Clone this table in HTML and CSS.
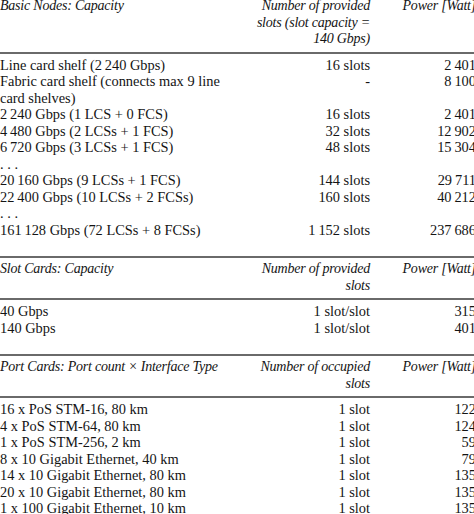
FILE: index.html
```html
<!DOCTYPE html>
<html>
<head>
<meta charset="utf-8">
<link rel="stylesheet" href="styles.css">
</head>
<body>
<table class="spec">
  <colgroup>
    <col class="c1"><col class="c2"><col class="c3">
  </colgroup>
  <tbody>
    <tr class="head first">
      <th class="l">Basic Nodes: Capacity</th>
      <th class="r">Number of provided<br>slots (slot capacity =<br>140 Gbps)</th>
      <th class="r">Power [Watt]</th>
    </tr>
    <tr class="top"><td>Line card shelf (2&thinsp;240 Gbps)</td><td class="r">16 slots</td><td class="r">2&thinsp;401</td></tr>
    <tr><td>Fabric card shelf (connects max 9 line<br>card shelves)</td><td class="r">-</td><td class="r">8&thinsp;100</td></tr>
    <tr><td>2&thinsp;240 Gbps (1 LCS + 0 FCS)</td><td class="r">16 slots</td><td class="r">2&thinsp;401</td></tr>
    <tr><td>4&thinsp;480 Gbps (2 LCSs + 1 FCS)</td><td class="r">32 slots</td><td class="r">12&thinsp;902</td></tr>
    <tr><td>6&thinsp;720 Gbps (3 LCSs + 1 FCS)</td><td class="r">48 slots</td><td class="r">15&thinsp;304</td></tr>
    <tr><td>. . .</td><td></td><td></td></tr>
    <tr><td>20&thinsp;160 Gbps (9 LCSs + 1 FCS)</td><td class="r">144 slots</td><td class="r">29&thinsp;711</td></tr>
    <tr><td>22&thinsp;400 Gbps (10 LCSs + 2 FCSs)</td><td class="r">160 slots</td><td class="r">40&thinsp;212</td></tr>
    <tr><td>. . .</td><td></td><td></td></tr>
    <tr class="last"><td>161&thinsp;128 Gbps (72 LCSs + 8 FCSs)</td><td class="r">1&thinsp;152 slots</td><td class="r">237&thinsp;686</td></tr>

    <tr class="head">
      <th class="l">Slot Cards: Capacity</th>
      <th class="r">Number of provided<br>slots</th>
      <th class="r">Power [Watt]</th>
    </tr>
    <tr class="top"><td>40 Gbps</td><td class="r">1 slot/slot</td><td class="r">315</td></tr>
    <tr class="last"><td>140 Gbps</td><td class="r">1 slot/slot</td><td class="r">401</td></tr>

    <tr class="head">
      <th class="l">Port Cards: Port count × Interface Type</th>
      <th class="r">Number of occupied<br>slots</th>
      <th class="r">Power [Watt]</th>
    </tr>
    <tr class="top"><td>16 x PoS STM-16, 80 km</td><td class="r">1 slot</td><td class="r">122</td></tr>
    <tr><td>4 x PoS STM-64, 80 km</td><td class="r">1 slot</td><td class="r">124</td></tr>
    <tr><td>1 x PoS STM-256, 2 km</td><td class="r">1 slot</td><td class="r">59</td></tr>
    <tr><td>8 x 10 Gigabit Ethernet, 40 km</td><td class="r">1 slot</td><td class="r">79</td></tr>
    <tr><td>14 x 10 Gigabit Ethernet, 80 km</td><td class="r">1 slot</td><td class="r">135</td></tr>
    <tr><td>20 x 10 Gigabit Ethernet, 80 km</td><td class="r">1 slot</td><td class="r">135</td></tr>
    <tr><td>1 x 100 Gigabit Ethernet, 10 km</td><td class="r">1 slot</td><td class="r">135</td></tr>
  </tbody>
</table>
</body>
</html>
```
FILE: styles.css
```css
html, body {
  margin: 0;
  padding: 0;
  overflow: hidden;
  background: #ffffff;
}
body {
  width: 474px;
  height: 514px;
  font-family: "Liberation Serif", "Times New Roman", serif;
  font-size: 14.4px;
  line-height: 16.5px;
  color: #141414;
}
.spec {
  border-collapse: collapse;
  table-layout: fixed;
  width: 476px;
  margin-top: -5px;
}
.c1 { width: 236px; }
.c2 { width: 134px; }
.c3 { width: 106px; }
.spec th, .spec td {
  padding: 0;
  vertical-align: top;
  white-space: nowrap;
}
.spec th {
  font-weight: normal;
  font-style: italic;
  font-size: 14px;
  letter-spacing: -0.22px;
}
.l { text-align: left; }
.r { text-align: right; }
.head th {
  padding-top: 3px;
  padding-bottom: 4px;
  border-top: 2px solid #6a6a6a;
  border-bottom: 2px solid #6a6a6a;
}
.head.first th { border-top: none; }
.top td { padding-top: 3px; }
.last td { padding-bottom: 18px; }
```
